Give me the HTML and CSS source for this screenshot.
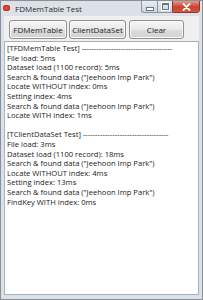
FILE: index.html
```html
<!DOCTYPE html>
<html lang="en">
<head>
    <meta charset="UTF-8">
    <title>FDMemTable Test</title>
    <link rel="stylesheet" href="styles.css">
</head>
<body>
    <div class="window">
        <div class="titlebar">
            <div class="app-icon"></div>
            <span class="title">FDMemTable Test</span>
            <div class="caption-buttons">
                <div class="cap-btn cap-min"><span class="min-glyph"></span></div>
                <div class="cap-btn cap-max"><span class="max-glyph"></span></div>
                <div class="cap-btn cap-close">
                    <svg width="9" height="8" viewBox="0 0 9 8">
                        <path d="M1.5 1 L7.5 7 M7.5 1 L1.5 7" stroke="#ffffff" stroke-width="1.8" stroke-linecap="round"/>
                    </svg>
                </div>
            </div>
        </div>

        <div class="client">
            <div class="toolbar">
                <button class="btn btn-mem">FDMemTable</button>
                <button class="btn btn-cds">ClientDataSet</button>
                <button class="btn btn-clear">Clear</button>
            </div>

            <div class="memo">
                <p>[TFDMemTable Test] -------------------------------------</p>
                <p>File load: 5ms</p>
                <p>Dataset load (1100 record): 5ms</p>
                <p>Search &amp; found data ("Jeehoon Imp Park")</p>
                <p>Locate WITHOUT index: 0ms</p>
                <p>Setting index: 4ms</p>
                <p>Search &amp; found data ("Jeehoon Imp Park")</p>
                <p>Locate WITH index: 1ms</p>
                <p>&nbsp;</p>
                <p>[TClientDataSet Test] -----------------------------------</p>
                <p>File load: 3ms</p>
                <p>Dataset load (1100 record): 18ms</p>
                <p>Search &amp; found data ("Jeehoon Imp Park")</p>
                <p>Locate WITHOUT index: 4ms</p>
                <p>Setting index: 13ms</p>
                <p>Search &amp; found data ("Jeehoon Imp Park")</p>
                <p>FindKey WITH index: 0ms</p>
            </div>
        </div>
    </div>
</body>
</html>
```

FILE: styles.css
```css
body {
    margin: 0;
    font-family: "Open Sans", "Liberation Sans", sans-serif;
    background: #ffffff;
}

.window {
    width: 203px;
    height: 300px;
    box-sizing: border-box;
    border: 1px solid #8c9096;
    background: #dce1e7;
    display: flex;
    flex-direction: column;
    overflow: hidden;
}

.titlebar {
    height: 15px;
    display: flex;
    align-items: flex-start;
    flex-shrink: 0;
}

.app-icon {
    width: 7px;
    height: 6px;
    margin: 4px 0 0 2px;
    border-radius: 3px;
    background: #e0463c;
    box-shadow: inset 0 0 0 1px #b52f28;
}

.title {
    margin: 2px 0 0 5px;
    font-size: 8px;
    line-height: 11px;
    color: #2b2b2b;
}

.caption-buttons {
    margin-left: auto;
    margin-right: 2px;
    display: flex;
    height: 13px;
    margin-top: -1px;
}

.cap-btn {
    height: 13px;
    box-sizing: border-box;
    border: 1px solid #8d96a3;
    display: flex;
    align-items: center;
    justify-content: center;
}

.cap-min {
    width: 16px;
    border-radius: 0 0 0 3px;
    border-right: none;
    background: linear-gradient(#e8edf3, #cdd5df);
}

.cap-max {
    width: 15px;
    border-right: none;
    background: linear-gradient(#e8edf3, #cdd5df);
}

.cap-close {
    width: 28px;
    border-color: #8a3a33;
    border-radius: 0 0 3px 0;
    background: linear-gradient(#e39a8e, #c8412f 55%, #d9553f);
}

.min-glyph {
    width: 6px;
    height: 2px;
    margin-top: 4px;
    background: #ffffff;
    border: 1px solid #6a7584;
}

.max-glyph {
    width: 5px;
    height: 4px;
    background: transparent;
    border: 1px solid #6a7584;
    border-top-width: 2px;
    box-shadow: 0 0 0 1px #ffffff;
}

.client {
    flex: 1;
    margin: 0 3px 4px 3px;
    background: #f0f0f0;
    display: flex;
    flex-direction: column;
    min-height: 0;
}

.toolbar {
    display: flex;
    gap: 2px;
    padding: 4px 0 0 5px;
    height: 21px;
    flex-shrink: 0;
}

.btn {
    height: 19px;
    padding: 0;
    border: 1px solid #8e8f8f;
    border-radius: 3px;
    background: linear-gradient(#f6f6f6, #e9e9e9 50%, #dcdcdc 51%, #d2d2d2);
    box-shadow: inset 0 0 0 1px #fbfbfb;
    font-family: "Open Sans", "Liberation Sans", sans-serif;
    font-size: 8px;
    color: #1e1e1e;
}

.btn-mem {
    width: 58px;
}

.btn-cds {
    width: 57px;
}

.btn-clear {
    width: 55px;
    margin-left: 1px;
}

.memo {
    flex: 1;
    background: #ffffff;
    border: 1px solid #a3b4c8;
    border-top-color: #abadb3;
    padding: 2px 2px;
    overflow: hidden;
}

.memo p {
    margin: 0;
    font-size: 7.6px;
    line-height: 9.6px;
    color: #1a1a1a;
    white-space: nowrap;
}
```
